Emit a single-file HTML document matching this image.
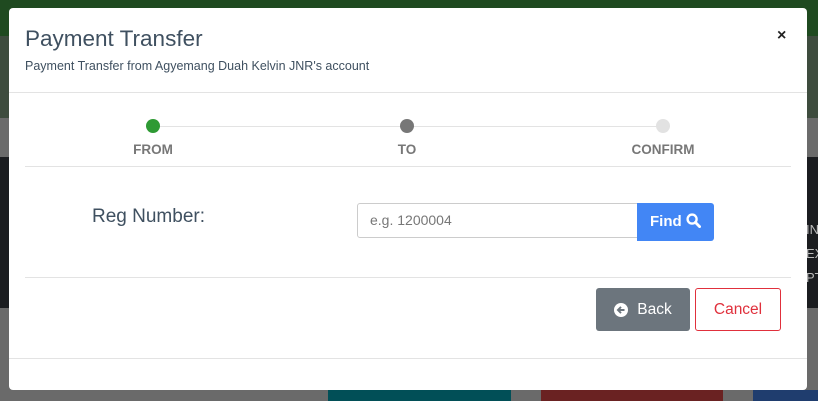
<!DOCTYPE html>
<html><head><style>
*{box-sizing:border-box;margin:0;padding:0}
body{width:818px;height:401px;overflow:hidden;position:relative;font-family:"Liberation Sans",sans-serif;background:#6a6a6a}
.bg{position:absolute;left:0;width:818px}
.modal{position:absolute;left:9px;top:8px;width:798px;height:382px;background:#fff;border-radius:4px}
.hr{position:absolute;height:1px;background:#e3e3e3}
</style></head><body>
<div class="bg" style="top:0;height:36px;background:#1f4a20"></div>
<div class="bg" style="top:36px;height:82px;background:#3e4c3e"></div>
<div class="bg" style="top:118px;height:39px;background:#6b6b6b"></div>
<div class="bg" style="top:157px;height:151px;background:#1b1d20"></div>
<div class="bg" style="top:308px;height:82px;background:#6a6a6a"></div>
<div style="position:absolute;left:328px;top:390px;width:183px;height:11px;background:#014f57"></div>
<div style="position:absolute;left:541px;top:390px;width:182px;height:11px;background:#6a2222"></div>
<div style="position:absolute;left:753px;top:390px;width:65px;height:11px;background:#1f3d6e"></div>
<div style="position:absolute;left:806px;top:218px;color:#bbb;font-size:13px;line-height:24px">IN<br>EX<br>PT</div>
<div class="modal">
 <div style="position:absolute;left:16px;top:18px;font-size:22.5px;color:#3f5060">Payment Transfer</div>
 <div style="position:absolute;left:16px;top:51px;font-size:12.5px;color:#3f5060">Payment Transfer from Agyemang Duah Kelvin JNR's account</div>
 <div style="position:absolute;left:768px;top:19px;font-size:16px;font-weight:bold;color:#222">×</div>
 <div class="hr" style="left:0;top:84px;width:798px"></div>
 <div class="hr" style="left:143px;top:118px;width:511px"></div>
 <div style="position:absolute;left:137px;top:111px;width:14px;height:14px;border-radius:50%;background:#2e9a34"></div>
 <div style="position:absolute;left:391px;top:111px;width:14px;height:14px;border-radius:50%;background:#777"></div>
 <div style="position:absolute;left:647px;top:111px;width:14px;height:14px;border-radius:50%;background:#e2e2e2"></div>
 <div style="position:absolute;left:104px;top:134px;width:80px;text-align:center;font-size:13.5px;font-weight:bold;color:#777">FROM</div>
 <div style="position:absolute;left:358px;top:134px;width:80px;text-align:center;font-size:13.5px;font-weight:bold;color:#777">TO</div>
 <div style="position:absolute;left:614px;top:134px;width:80px;text-align:center;font-size:13.5px;font-weight:bold;color:#777">CONFIRM</div>
 <div class="hr" style="left:16px;top:158px;width:766px"></div>
 <div style="position:absolute;left:83px;top:198px;font-size:19px;color:#3f5060">Reg Number:</div>
 <div style="position:absolute;left:348px;top:195px;width:282px;height:35px;border:1px solid #ccc;border-radius:3px 0 0 3px;font-size:14px;color:#777;padding:8px 12px">e.g. 1200004</div>
 <div style="position:absolute;left:628px;top:195px;width:77px;height:38px;background:#4286f5;border-radius:0 3px 3px 0;color:#fff;font-size:15px;font-weight:bold;padding:10px 13px;white-space:nowrap">Find <svg width="15" height="15" viewBox="0 0 16 16" style="vertical-align:-2px"><circle cx="6.5" cy="6.5" r="4.8" fill="none" stroke="#fff" stroke-width="2.5"/><path d="M10 10l4.5 4.5" stroke="#fff" stroke-width="3" stroke-linecap="round"/></svg></div>
 <div class="hr" style="left:16px;top:269px;width:766px"></div>
 <div style="position:absolute;left:587px;top:280px;width:94px;height:43px;background:#6c757d;border-radius:3px;color:#fff;font-size:15.5px;display:flex;align-items:center;justify-content:center;white-space:nowrap"><svg width="14" height="14" viewBox="0 0 16 16"><circle cx="8" cy="8" r="8" fill="#fff"/><path d="M12 8H5M8 4.5L4.5 8 8 11.5" stroke="#6c757d" stroke-width="2.2" fill="none"/></svg><span style="margin-left:9px">Back</span></div>
 <div style="position:absolute;left:686px;top:280px;width:86px;height:43px;border:1px solid #e0303c;border-radius:3px;color:#e0303c;font-size:15.5px;text-align:center;line-height:41px">Cancel</div>
 <div class="hr" style="left:0;top:350px;width:798px"></div>
</div>
</body></html>
